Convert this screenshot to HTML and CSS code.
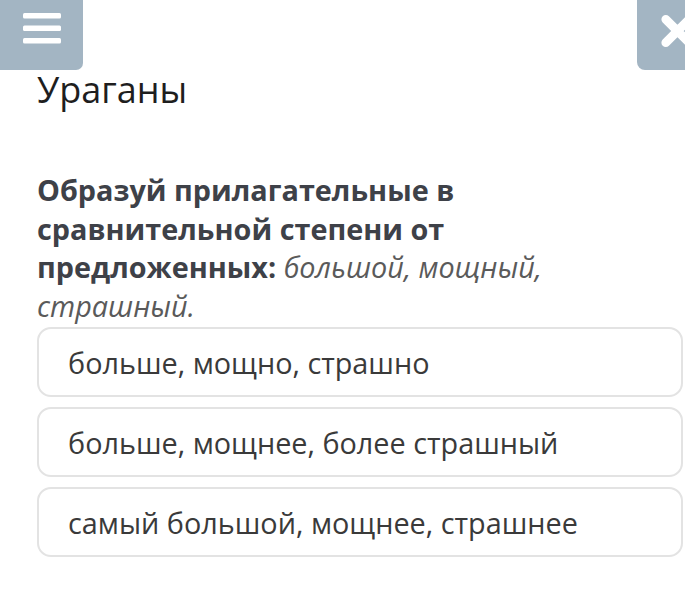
FILE: index.html
```html
<!DOCTYPE html>
<html lang="ru">
<head>
<meta charset="utf-8">
<link rel="stylesheet" href="styles.css">
</head>
<body>
<div class="topbar">
  <div class="btn btn-menu">
    <svg width="38" height="32" viewBox="0 0 38 32"><rect x="0" y="0" width="38" height="5.5" rx="1.5" fill="#fff"/><rect x="0" y="12.5" width="38" height="5.5" rx="1.5" fill="#fff"/><rect x="0" y="25" width="38" height="5.5" rx="1.5" fill="#fff"/></svg>
  </div>
  <div class="btn btn-close">
    <svg width="40" height="40" viewBox="0 0 40 40"><path d="M8 8 L32 32 M32 8 L8 32" stroke="#fff" stroke-width="9" stroke-linecap="round"/></svg>
  </div>
</div>
<main class="content">
  <h1 class="title">Ураганы</h1>
  <p class="question"><b>Образуй прилагательные в сравнительной степени от предложенных:</b> <i>большой, мощный, страшный.</i></p>
  <div class="options">
    <div class="option">больше, мощно, страшно</div>
    <div class="option">больше, мощнее, более страшный</div>
    <div class="option">самый большой, мощнее, страшнее</div>
  </div>
</main>
</body>
</html>
```
FILE: styles.css
```css
html, body { margin: 0; padding: 0; background: #fff; }
body { font-family: "Open Sans", "Noto Sans", sans-serif; width: 685px; height: 592px; overflow: hidden; position: relative; }
.topbar { position: absolute; top: 0; left: 0; right: 0; height: 70px; }
.btn { position: absolute; top: 0; height: 70px; background: #a3b5c3; display: flex; align-items: flex-start; }
.btn-menu { left: 0; width: 83px; border-bottom-right-radius: 7px; }
.btn-menu svg { margin-left: 23px; margin-top: 13px; }
.btn-close { left: 637px; width: 60px; border-bottom-left-radius: 8px; }
.btn-close svg { margin-left: 21px; margin-top: 11px; }
.content { padding: 68px 2px 0 37px; }
.title { margin: 0; font-weight: 400; font-size: 36px; line-height: 44px; color: #1e1e1e; }
.question { margin: 59px 0 0 0; font-size: 28.8px; line-height: 38.5px; color: #3e4148; width: 560px; }
.question b { font-weight: 700; }
.question i { color: #5a5a5a; font-weight: 400; }
.options { display: flex; flex-direction: column; gap: 10px; margin-top: 2px; }
.option { height: 66px; border: 2px solid #e3e3e3; border-radius: 14px; padding-left: 29px; display: flex; align-items: center; font-size: 28.8px; color: #3a3a3a; }
```
